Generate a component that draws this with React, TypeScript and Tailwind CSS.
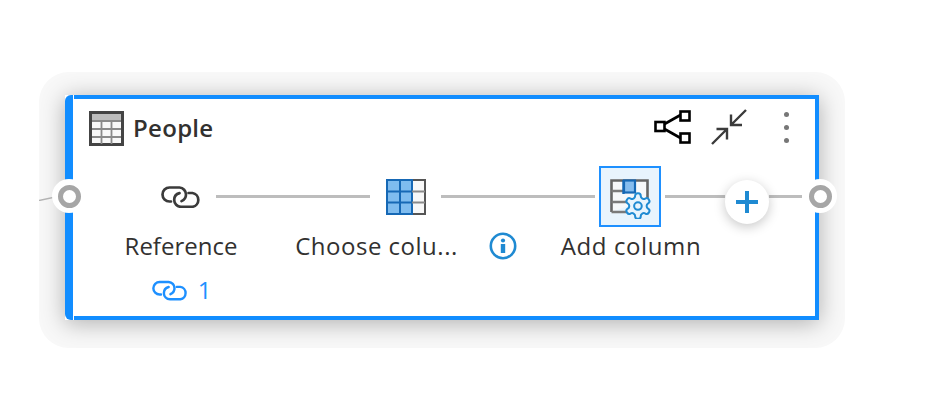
import React from "react";

const font = "font-['Open_Sans','Noto_Sans',sans-serif]";

function LinkIcon({ color, className }: { color: string; className: string }) {
  return (
    <svg viewBox="0 0 40 22" fill="none" stroke={color} strokeWidth="2.7" strokeLinecap="round" className={className}>
      <path d="M10 15.5H8.5a7 7 0 0 1 0-14h10a7 7 0 0 1 6.5 7c0 3.5-2.2 5.5-4.5 6.6" />
      <path d="M27.5 7h4a7 7 0 0 1 0 13.8H20a6.8 6.8 0 0 1-6.8-6.9c0-3.7 2.6-6.1 5.3-6.8" />
    </svg>
  );
}

function Port() {
  return (
    <div className="flex h-[34px] w-[34px] items-center justify-center rounded-full bg-white">
      <div className="h-[23px] w-[23px] rounded-full border-[5px] border-[#a6a6a6] bg-white" />
    </div>
  );
}

function Line({ className }: { className: string }) {
  return <div className={`h-[3px] bg-[#bdbdbd] ${className}`} />;
}

function TableIcon() {
  return (
    <svg viewBox="0 0 35 35" className="h-[35px] w-[35px]">
      <rect x="1.5" y="1.5" width="32" height="32" fill="#f8f8f8" stroke="#444" strokeWidth="3" />
      <rect x="3" y="3" width="29" height="6" fill="#bdbdbd" />
      <path d="M3 10h29M3 18h29M3 26h29M12.5 10v23M22.5 10v23" stroke="#8a8a8a" strokeWidth="1.8" />
    </svg>
  );
}

function ChooseIcon() {
  return (
    <svg viewBox="0 0 40 36" className="h-[36px] w-[40px]">
      <rect x="1" y="1" width="38" height="34" fill="#f8f8f8" stroke="#555" strokeWidth="2" />
      <rect x="1" y="1" width="25" height="34" fill="#7fbcef" stroke="#1668b5" strokeWidth="2" />
      <path d="M14 1v34M1 12.5h25M1 23.5h25" stroke="#1668b5" strokeWidth="2" />
      <path d="M26 12.5h13M26 23.5h13" stroke="#8a8a8a" strokeWidth="2" />
    </svg>
  );
}

function AddColumnIcon() {
  return (
    <svg viewBox="0 0 42 40" className="h-[40px] w-[42px]">
      <path d="M1.5 33V1.5h36V20" fill="#f6f8fa" stroke="#666" strokeWidth="2.6" />
      <path d="M1.5 33H18M1.5 12h22M1.5 23h16" stroke="#7a7a7a" strokeWidth="2.4" fill="none" />
      <path d="M13.5 1v14" stroke="#1668b5" strokeWidth="2.4" />
      <rect x="14" y="1.5" width="11" height="12" fill="#86bdef" stroke="#1668b5" strokeWidth="2.2" />
      <g transform="translate(12.7 11.8) scale(1.27)">
        <path
          d="M12.22 2h-.44a2 2 0 0 0-2 2v.18a2 2 0 0 1-1 1.73l-.43.25a2 2 0 0 1-2 0l-.15-.08a2 2 0 0 0-2.73.73l-.22.38a2 2 0 0 0 .73 2.73l.15.1a2 2 0 0 1 1 1.72v.51a2 2 0 0 1-1 1.74l-.15.09a2 2 0 0 0-.73 2.73l.22.38a2 2 0 0 0 2.73.73l.15-.08a2 2 0 0 1 2 0l.43.25a2 2 0 0 1 1 1.73V20a2 2 0 0 0 2 2h.44a2 2 0 0 0 2-2v-.18a2 2 0 0 1 1-1.73l.43-.25a2 2 0 0 1 2 0l.15.08a2 2 0 0 0 2.73-.73l.22-.39a2 2 0 0 0-.73-2.73l-.15-.08a2 2 0 0 1-1-1.74v-.5a2 2 0 0 1 1-1.74l.15-.09a2 2 0 0 0 .73-2.73l-.22-.38a2 2 0 0 0-2.73-.73l-.15.08a2 2 0 0 1-2 0l-.43-.25a2 2 0 0 1-1-1.73V4a2 2 0 0 0-2-2z"
          fill="#e8f4fd"
          stroke="#1f8ad2"
          strokeWidth="1.6"
        />
        <circle cx="12" cy="12" r="3" fill="none" stroke="#1f8ad2" strokeWidth="1.6" />
      </g>
    </svg>
  );
}

function ShareIcon() {
  return (
    <svg viewBox="0 0 37 34" fill="none" stroke="#000" strokeWidth="2.6" className="h-[34px] w-[37px]">
      <rect x="1.5" y="12" width="9" height="9" />
      <rect x="26.5" y="1.5" width="9" height="9" />
      <rect x="26.5" y="23.5" width="9" height="9" />
      <path d="M10.5 14l16-9M10.5 19l16 9" />
    </svg>
  );
}

function CollapseIcon() {
  return (
    <svg viewBox="0 0 36 36" fill="none" stroke="#3b3b3b" strokeWidth="2.4" className="h-[36px] w-[36px]">
      <path d="M1 35l15-15M5.5 20H16v10.5M35 1L20 16M20 5.5V16h11" />
    </svg>
  );
}

function InfoIcon() {
  return (
    <svg viewBox="0 0 28 28" className="h-[28px] w-[28px]">
      <circle cx="14" cy="14" r="12.2" fill="none" stroke="#1f8ad2" strokeWidth="2.6" />
      <circle cx="14" cy="8.5" r="2.1" fill="#1f8ad2" />
      <rect x="11.8" y="12" width="4.4" height="9" fill="#1f8ad2" />
    </svg>
  );
}

export default function App() {
  return (
    <div className={`h-[415px] w-[926px] overflow-hidden bg-white pl-[39px] pt-[72px] ${font}`}>
      <div className="relative h-[276px] w-[806px] overflow-hidden rounded-[30px] bg-[#f8f8f8] pl-[26px] pt-[23px]">
        {/* incoming edge */}
        <svg viewBox="0 0 14 4" className="absolute left-0 top-[125px] h-[4px] w-[14px]">
          <path d="M0 3.5L14 .5" stroke="#b3b3b3" strokeWidth="1.5" />
        </svg>
        <div className="absolute left-[13px] top-[107px] z-10">
          <Port />
        </div>
        <div className="absolute left-[764px] top-[107px] z-10">
          <Port />
        </div>

        <div className="flex h-[225px] w-[754px] bg-white shadow-[0_3px_22px_rgba(0,0,0,0.3)]">
          <div className="w-[8px] rounded-l-[6px] bg-[#118dff]" />
          <div className="ml-[1px] flex-1 border-y-4 border-r-4 border-[#118dff]">
            <div className="flex h-[47px] items-end pl-[15px]">
              <TableIcon />
              <span className="ml-[9px] text-[24px] leading-[36px] font-semibold tracking-[0.3px] text-[#323130]">People</span>
              <div className="ml-auto flex items-center self-end pb-[1px]">
                <ShareIcon />
                <div className="ml-[20px]">
                  <CollapseIcon />
                </div>
                <div className="ml-[37px] mr-[26px] flex flex-col gap-[8px]">
                  <div className="h-[5px] w-[5px] rounded-full bg-[#777]" />
                  <div className="h-[5px] w-[5px] rounded-full bg-[#777]" />
                  <div className="h-[5px] w-[5px] rounded-full bg-[#777]" />
                </div>
              </div>
            </div>

            <div className="mt-[20px] flex h-[61px] items-center pl-[87px]">
              <LinkIcon color="#3b3b3b" className="h-[22px] w-[40px]" />
              <Line className="ml-[15px] w-[154px]" />
              <div className="ml-[16px]">
                <ChooseIcon />
              </div>
              <Line className="ml-[15px] w-[154px]" />
              <div className="ml-[4px] flex h-[61px] w-[62px] items-center justify-center border-2 border-[#1e90ff] bg-[#e8f4fd] pl-[1px] pt-[4px]">
                <AddColumnIcon />
              </div>
              <Line className="ml-[4px] w-[60px]" />
              <div className="relative z-10 mt-[10px] flex h-[44px] w-[44px] items-center justify-center rounded-full bg-white text-[#1f8ad2] shadow-[0_3px_12px_rgba(0,0,0,0.22)]">
                <svg viewBox="0 0 22 22" fill="currentColor" className="h-[22px] w-[22px]">
                  <path d="M9 0h4v9h9v4h-9v9H9v-9H0V9h9z" />
                </svg>
              </div>
              <Line className="w-[33px]" />
            </div>

            <div className="-ml-[5.5px] mt-[1px] flex text-[24px] leading-[36px] text-[#323130]">
              <div className="w-[225px] text-center">Reference</div>
              <div className="flex w-[225px] items-center justify-center gap-[31px] tracking-[0.5px]">
                <span>Choose colu...</span>
                <InfoIcon />
              </div>
              <div className="w-[225px] text-center tracking-[0.6px]">Add column</div>
            </div>

            <div className="mt-[10px] flex w-[215px] items-center justify-center gap-[10px] text-[#1e90ff]">
              <LinkIcon color="#1e90ff" className="h-[23px] w-[36px]" />
              <span className="text-[24px] leading-[32px]">1</span>
            </div>
          </div>
        </div>
      </div>
    </div>
  );
}
